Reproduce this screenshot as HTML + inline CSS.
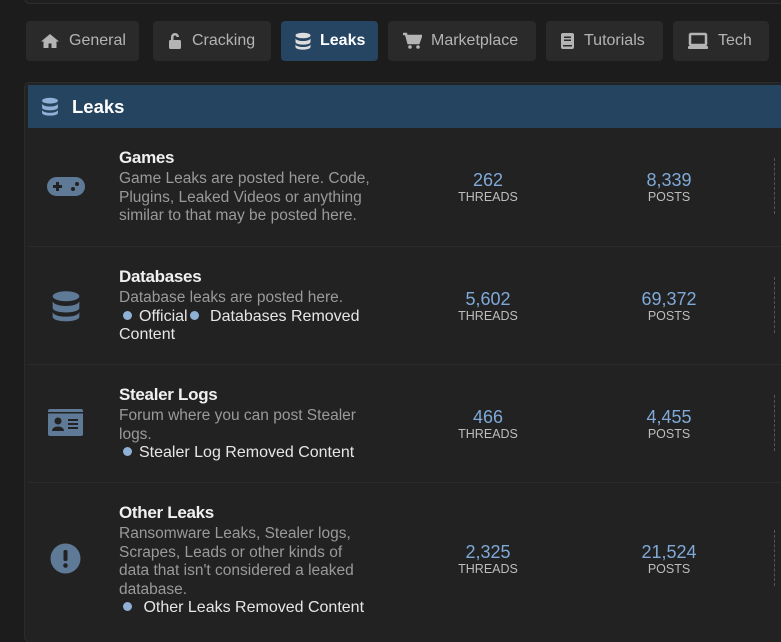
<!DOCTYPE html>
<html><head><style>
*{margin:0;padding:0;box-sizing:border-box}
body{width:781px;height:631px;overflow:hidden;background:#1c1c1c;font-family:"Liberation Sans",sans-serif;position:relative}
.top{position:absolute;left:24px;top:-10px;width:770px;height:14px;border:1px solid #2e2e2e;border-radius:6px;background:#1f1f1f}
.tab{position:absolute;top:21px;height:40px;background:#2a2a2a;border-radius:4px;color:#b4b4b4;font-size:16px;display:flex;align-items:center;padding-left:14px}
.tab svg{margin-right:9px}
.tab.act{background:#264563;color:#fff;font-weight:bold}
.box{position:absolute;left:24px;top:82px;width:770px;height:560px;border:1px solid #2c2c2c;border-radius:5px;background:#222}
.hdr{position:absolute;left:28px;top:85px;width:760px;height:43px;background:#25445f;color:#fff;font-weight:bold;font-size:18.5px;display:flex;align-items:center;padding-left:13px}
.row{position:absolute;left:28px;width:760px;height:118px;border-top:1px solid #2b2b2b;background:#222}
.ic{position:absolute;left:18px}
.t{position:absolute;left:91px;color:#f0f0f0;font-weight:bold;font-size:17px;letter-spacing:-0.3px}
.d{position:absolute;left:91px;width:300px;white-space:nowrap;color:#9a9a9a;font-size:15.5px;line-height:18.5px}
.d b{color:#e6e6e6;font-weight:normal;font-size:16px}
.dot{display:inline-block;width:9px;height:9px;border-radius:50%;background:#8fb1d6;margin:0 7px 1px 4px}
.st{position:absolute;width:120px;text-align:center}
.n{color:#7fa9d8;font-size:18px;line-height:20px}
.l{color:#bdbdbd;font-size:12.5px;line-height:14px}
.dash{position:absolute;left:746px;width:0;height:56px;border-left:1px dashed #555}
</style></head><body>
<div class="top"></div>
<div class="tab" style="left:26px;width:113px"><svg width="20" height="16" viewBox="0 0 20 16"><path d="M10 1 1 8.5h2.5V15h5v-4.5h3V15h5V8.5H19z" fill="#b4b4b4"/></svg>General</div>
<div class="tab" style="left:153px;width:118px"><svg width="16" height="18" viewBox="0 0 16 18"><path d="M4 8V5a4 4 0 0 1 8 0h-2.5a1.5 1.5 0 0 0-3 0v3z" fill="#b4b4b4"/><rect x="2" y="8" width="12" height="9" rx="1.5" fill="#b4b4b4"/></svg>Cracking</div>
<div class="tab act" style="left:281px;width:97px"><svg width="16" height="18" viewBox="0 0 16 18"><ellipse cx="8" cy="3.5" rx="7.5" ry="2.8" fill="#ddd"/><path d="M.5 6c0 4 15 4 15 0v4c0 3.5-15 3.5-15 0zM.5 12c0 4 15 4 15 0v3c0 3.5-15 3.5-15 0z" fill="#ddd"/></svg>Leaks</div>
<div class="tab" style="left:388px;width:148px"><svg width="20" height="18" viewBox="0 0 20 18"><path d="M1 2h3l2.5 9h10L19 4H5.5" fill="none" stroke="#b4b4b4" stroke-width="2.5"/><path d="M6 4h13l-2 7H7z" fill="#b4b4b4"/><circle cx="8" cy="15" r="1.8" fill="#b4b4b4"/><circle cx="16" cy="15" r="1.8" fill="#b4b4b4"/></svg>Marketplace</div>
<div class="tab" style="left:546px;width:117px"><svg width="15" height="18" viewBox="0 0 15 18"><rect x="1" y="1" width="13" height="16" rx="2" fill="#b4b4b4"/><rect x="4" y="4.5" width="7" height="1.5" fill="#2a2a2a"/><rect x="4" y="7.5" width="7" height="1.5" fill="#2a2a2a"/><rect x="3" y="13" width="9" height="1.5" fill="#2a2a2a"/></svg>Tutorials</div>
<div class="tab" style="left:673px;width:96px"><svg width="22" height="18" viewBox="0 0 22 18"><rect x="3" y="2" width="16" height="11" rx="1" fill="none" stroke="#b4b4b4" stroke-width="2.5"/><rect x="1" y="14" width="20" height="3" rx="1" fill="#b4b4b4"/></svg>Tech</div>
<div class="box"></div>
<div class="hdr"><svg width="18" height="19" viewBox="0 0 16 18" style="margin-right:13px"><ellipse cx="8" cy="3.5" rx="7.5" ry="2.8" fill="#8fb1d6"/><path d="M.5 6c0 4 15 4 15 0v4c0 3.5-15 3.5-15 0zM.5 12c0 4 15 4 15 0v3c0 3.5-15 3.5-15 0z" fill="#8fb1d6"/></svg>Leaks</div>

<div class="row" style="top:128px;border-top:none">
<svg class="ic" style="top:48px" width="40" height="22" viewBox="0 0 40 22"><rect x="1" y="1" width="38" height="19" rx="9.5" fill="#5f7a96"/><rect x="7" y="9" width="9" height="3" fill="#222"/><rect x="10" y="6" width="3" height="9" fill="#222"/><circle cx="27" cy="13" r="2" fill="#222"/><circle cx="31" cy="8" r="2" fill="#222"/></svg>
<div class="t" style="top:20px">Games</div>
<div class="d" style="top:42px">Game Leaks are posted here. Code,<br>Plugins, Leaked Videos or anything<br>similar to that may be posted here.</div>
<div class="st" style="left:400px;top:42px"><div class="n">262</div><div class="l">THREADS</div></div>
<div class="st" style="left:581px;top:42px"><div class="n">8,339</div><div class="l">POSTS</div></div>
<div class="dash" style="top:30px"></div>
</div>

<div class="row" style="top:246px">
<svg class="ic" style="top:43px;left:23px" width="30" height="32" viewBox="0 0 16 18"><ellipse cx="8" cy="3.5" rx="7.5" ry="2.8" fill="#5f7a96"/><path d="M.5 6c0 4 15 4 15 0v4c0 3.5-15 3.5-15 0zM.5 12c0 4 15 4 15 0v3c0 3.5-15 3.5-15 0z" fill="#5f7a96"/></svg>
<div class="t" style="top:20px">Databases</div>
<div class="d" style="top:42px">Database leaks are posted here.<br><b><span class="dot"></span>Official<span class="dot" style="margin-left:2px"></span> Databases Removed<br>Content</b></div>
<div class="st" style="left:400px;top:42px"><div class="n">5,602</div><div class="l">THREADS</div></div>
<div class="st" style="left:581px;top:42px"><div class="n">69,372</div><div class="l">POSTS</div></div>
<div class="dash" style="top:30px"></div>
</div>

<div class="row" style="top:364px">
<svg class="ic" style="top:44px;left:20px" width="36" height="28" viewBox="0 0 36 28"><rect x="0" y="0" width="35" height="27" rx="2" fill="#5f7a96"/><rect x="0" y="3" width="35" height="1.5" fill="#222"/><circle cx="10" cy="12" r="3.5" fill="#222"/><path d="M4 22c0-6 12-6 12 0z" fill="#222"/><rect x="20" y="10" width="10" height="2" fill="#222"/><rect x="20" y="14" width="10" height="2" fill="#222"/><rect x="20" y="18" width="10" height="2" fill="#222"/></svg>
<div class="t" style="top:20px">Stealer Logs</div>
<div class="d" style="top:42px">Forum where you can post Stealer<br>logs.<br><b><span class="dot"></span>Stealer Log Removed Content</b></div>
<div class="st" style="left:400px;top:42px"><div class="n">466</div><div class="l">THREADS</div></div>
<div class="st" style="left:581px;top:42px"><div class="n">4,455</div><div class="l">POSTS</div></div>
<div class="dash" style="top:30px"></div>
</div>

<div class="row" style="top:482px;height:160px">
<svg class="ic" style="top:60px;left:22px" width="31" height="31" viewBox="0 0 31 31"><circle cx="15.5" cy="15.5" r="15" fill="#5f7a96"/><rect x="13.5" y="7" width="4" height="11" rx="1.5" fill="#222"/><circle cx="15.5" cy="22.5" r="2.3" fill="#222"/></svg>
<div class="t" style="top:20px">Other Leaks</div>
<div class="d" style="top:42px">Ransomware Leaks, Stealer logs,<br>Scrapes, Leads or other kinds of<br>data that isn't considered a leaked<br>database.<br><b><span class="dot"></span> Other Leaks Removed Content</b></div>
<div class="st" style="left:400px;top:59px"><div class="n">2,325</div><div class="l">THREADS</div></div>
<div class="st" style="left:581px;top:59px"><div class="n">21,524</div><div class="l">POSTS</div></div>
<div class="dash" style="top:47px"></div>
</div>
</body></html>
